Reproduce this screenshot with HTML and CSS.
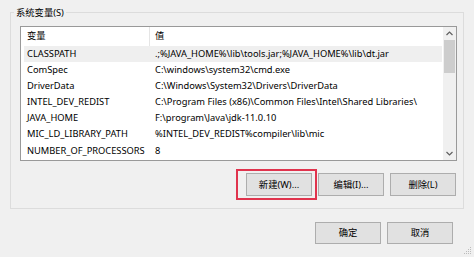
FILE: index.html
```html
<!DOCTYPE html>
<html lang="zh-CN">
<head>
    <meta charset="UTF-8">
    <title>环境变量</title>
    <link rel="stylesheet" href="styles.css">
</head>
<body>
    <div class="dialog">
        <!-- 系统变量 -->
        <div class="group">
            <span class="group-title">系统变量(S)</span>
            <div class="list">
                <div class="list-body">
                    <div class="list-head">
                        <div class="cell name">变量</div>
                        <div class="cell">值</div>
                    </div>
                    <div class="row selected">
                        <div class="cell name">CLASSPATH</div>
                        <div class="cell">.;%JAVA_HOME%\lib\tools.jar;%JAVA_HOME%\lib\dt.jar</div>
                    </div>
                    <div class="row">
                        <div class="cell name">ComSpec</div>
                        <div class="cell">C:\windows\system32\cmd.exe</div>
                    </div>
                    <div class="row">
                        <div class="cell name">DriverData</div>
                        <div class="cell">C:\Windows\System32\Drivers\DriverData</div>
                    </div>
                    <div class="row">
                        <div class="cell name">INTEL_DEV_REDIST</div>
                        <div class="cell">C:\Program Files (x86)\Common Files\Intel\Shared Libraries\</div>
                    </div>
                    <div class="row">
                        <div class="cell name">JAVA_HOME</div>
                        <div class="cell">F:\program\Java\jdk-11.0.10</div>
                    </div>
                    <div class="row">
                        <div class="cell name">MIC_LD_LIBRARY_PATH</div>
                        <div class="cell">%INTEL_DEV_REDIST%compiler\lib\mic</div>
                    </div>
                    <div class="row">
                        <div class="cell name">NUMBER_OF_PROCESSORS</div>
                        <div class="cell">8</div>
                    </div>
                </div>
                <div class="scrollbar">
                    <div class="arrow">
                        <svg width="7" height="5" viewBox="0 0 7 5"><polyline points="0.5,4 3.5,1 6.5,4" fill="none" stroke="#606060" stroke-width="1.2"/></svg>
                    </div>
                    <div class="thumb"></div>
                    <div class="track"></div>
                    <div class="arrow">
                        <svg width="7" height="5" viewBox="0 0 7 5"><polyline points="0.5,1 3.5,4 6.5,1" fill="none" stroke="#606060" stroke-width="1.2"/></svg>
                    </div>
                </div>
            </div>
            <div class="actions">
                <button class="btn marked">新建(W)...</button>
                <button class="btn">编辑(I)...</button>
                <button class="btn">删除(L)</button>
            </div>
        </div>

        <div class="footer">
            <button class="btn small">确定</button>
            <button class="btn small">取消</button>
        </div>

        <svg class="grip" width="8" height="8" viewBox="0 0 8 8">
            <rect x="6" y="0" width="1" height="1" fill="#bcbcbc"/>
            <rect x="4" y="2" width="1" height="1" fill="#bcbcbc"/>
            <rect x="6" y="2" width="1" height="1" fill="#bcbcbc"/>
            <rect x="2" y="4" width="1" height="1" fill="#bcbcbc"/>
            <rect x="4" y="4" width="1" height="1" fill="#bcbcbc"/>
            <rect x="6" y="4" width="1" height="1" fill="#bcbcbc"/>
            <rect x="0" y="6" width="1" height="1" fill="#bcbcbc"/>
            <rect x="2" y="6" width="1" height="1" fill="#bcbcbc"/>
            <rect x="4" y="6" width="1" height="1" fill="#bcbcbc"/>
            <rect x="6" y="6" width="1" height="1" fill="#bcbcbc"/>
        </svg>
    </div>
</body>
</html>
```

FILE: styles.css
```css
* {
    box-sizing: border-box;
}
html, body {
    margin: 0;
}
body {
    width: 474px;
    height: 257px;
    overflow: hidden;
    background: #f0f0f0;
    font-family: "Noto Sans", "Noto Sans CJK SC", sans-serif;
    font-size: 9.3px;
    color: #000;
}
.dialog {
    position: relative;
    height: 100%;
    padding-top: 12px;
}

/* 分组框 */
.group {
    position: relative;
    margin-left: 10px;
    width: 454px;
    height: 197px;
    border: 1px solid #dcdcdc;
    padding: 13px 6px 0 9px;
}
.group-title {
    position: absolute;
    top: -7px;
    left: 3px;
    padding: 0 2px;
    line-height: 13px;
    background: #f0f0f0;
}

/* 列表 */
.list {
    display: flex;
    height: 135px;
    border: 1px solid #999;
    background: #fff;
}
.list-body {
    flex: 1;
    min-width: 0;
    padding: 0 1px 0 3px;
}
.list-head, .row {
    display: grid;
    grid-template-columns: 126px 1fr;
    white-space: nowrap;
}
.list-head {
    height: 18.5px;
    line-height: 18px;
}
.list-head .name {
    border-right: 1px solid #e5e5e5;
}
.row {
    height: 16.2px;
    line-height: 16px;
}
.row.selected {
    background: #efefef;
}
.cell {
    overflow: hidden;
    padding-left: 5px;
}
.cell.name {
    padding-left: 3px;
}

/* 滚动条 */
.scrollbar {
    display: flex;
    flex-direction: column;
    width: 13px;
    background: #f0f0f0;
}
.arrow {
    height: 13px;
    display: flex;
    align-items: center;
    justify-content: center;
}
.thumb {
    height: 33px;
    margin: 0 1px;
    background: #cdcdcd;
}
.track {
    flex: 1;
}

/* 按钮 */
.actions, .footer {
    display: flex;
    justify-content: flex-end;
    gap: 6px;
}
.actions {
    margin-top: 12px;
    padding-right: 1px;
}
.footer {
    margin-top: 13px;
    padding-right: 21px;
}
.btn {
    position: relative;
    width: 66px;
    height: 23px;
    padding: 0;
    border: 1px solid #adadad;
    background: #e1e1e1;
    font: inherit;
    color: #000;
    line-height: 21px;
}
.btn.small {
    height: 22px;
    line-height: 20px;
}
.btn.marked::after {
    content: "";
    position: absolute;
    top: -5px;
    bottom: -5px;
    left: -11px;
    right: -6px;
    border: 2px solid #e0334d;
}
.grip {
    position: absolute;
    right: 2px;
    bottom: 2px;
}
```
